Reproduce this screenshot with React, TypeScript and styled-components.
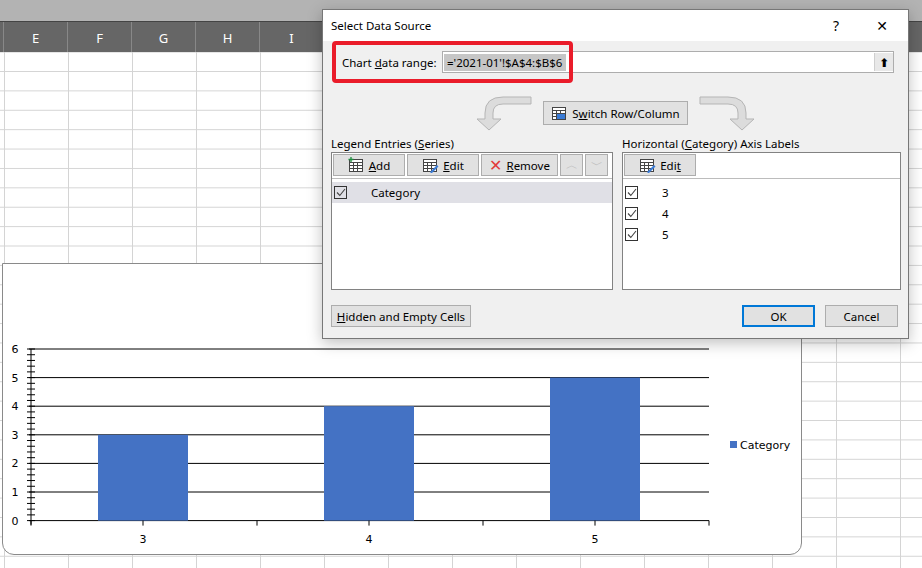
import styled, { createGlobalStyle } from "styled-components";

const GlobalStyle = createGlobalStyle`
  html, body { margin: 0; padding: 0; }
  body { font-family: "Segoe UI", "Noto Sans", "DejaVu Sans", sans-serif; font-size: 11.5px; color: #000; }
`;

const columns = ["", "E", "F", "G", "H", "I", "J", "K", "L", "M", "N", "O", "P", "Q", "R"];

const Screen = styled.div`
  position: relative;
  width: 922px;
  height: 568px;
  overflow: hidden;
  background: #fff;
`;

const TopStrip = styled.div`
  height: 21px;
  background: #b3b3b3;
  border-bottom: 1px solid #444;
`;

const HeaderRow = styled.div`
  display: flex;
  height: 30px;
  background: #666;
  color: #fff;
  margin-left: -60px;
`;

const HeaderCell = styled.div`
  flex: 0 0 64px;
  display: flex;
  align-items: center;
  justify-content: center;
  border-right: 1px solid #888;
  box-sizing: border-box;
  font-size: 13px;
  padding-top: 2px;
`;

const Cells = styled.div`
  height: 517px;
  background-image:
    linear-gradient(to right, #d4d4d4 1px, transparent 1px),
    linear-gradient(to bottom, #d4d4d4 1px, transparent 1px);
  background-size: 64px 19.4px;
  background-position: 4px 19px;
`;

const Chart = styled.div`
  position: absolute;
  left: 2px;
  top: 263px;
  width: 800px;
  height: 292px;
  background: #fff;
  border: 1px solid #8a8a8a;
  border-radius: 0 0 12px 12px;
  box-sizing: border-box;
`;

const Dialog = styled.div`
  position: absolute;
  left: 322px;
  top: 9px;
  width: 587px;
  height: 330px;
  background: #f0f0f0;
  border: 1px solid #777;
  box-sizing: border-box;
  box-shadow: 0 4px 14px rgba(0, 0, 0, 0.25);
  display: flex;
  flex-direction: column;
`;

const TitleBar = styled.div`
  height: 31px;
  background: #fff;
  display: flex;
  align-items: center;
  padding-left: 8px;
`;

const Title = styled.div`
  flex: 1;
`;

const TitleButton = styled.div`
  width: 40px;
  text-align: center;
  font-size: 14px;
  margin-right: 6px;
`;

const Body = styled.div`
  flex: 1;
  padding: 0 8px;
  display: flex;
  flex-direction: column;
`;

const RangeRow = styled.div`
  position: relative;
  display: flex;
  align-items: center;
  margin-top: 8px;
  height: 26px;
`;

const RangeLabel = styled.div`
  padding-left: 11px;
  width: 100px;
`;

const RangeInput = styled.div`
  flex: 1;
  height: 20px;
  background: #fff;
  border: 1px solid #adadad;
  display: flex;
  align-items: center;
  margin-right: 6px;
`;

const Selected = styled.span`
  background: #c6c6c6;
  padding: 1px 4px 1px 3px;
  margin-left: 1px;
`;

const Collapse = styled.div`
  margin-left: auto;
  width: 18px;
  height: 18px;
  border-left: 1px solid #cfcfcf;
  background: #e8e8e8;
  display: flex;
  align-items: center;
  justify-content: center;
  font-size: 12px;
  font-weight: bold;
`;

const Highlight = styled.div`
  position: absolute;
  left: 1px;
  top: -8px;
  width: 241px;
  height: 42px;
  border: 4px solid #ea1c2a;
  border-radius: 4px;
  box-sizing: border-box;
`;

const SwitchRow = styled.div`
  display: flex;
  justify-content: center;
  align-items: center;
  gap: 10px;
  margin-top: 19px;
  height: 38px;
`;

const Button = styled.div<{ $primary?: boolean; $disabled?: boolean }>`
  display: inline-flex;
  align-items: center;
  justify-content: center;
  gap: 4px;
  height: 22px;
  padding: 0 7px;
  background: #e1e1e1;
  border: ${(p) => (p.$primary ? "2px solid #0078d7" : "1px solid #adadad")};
  box-sizing: border-box;
  color: ${(p) => (p.$disabled ? "#bcbcbc" : "#000")};
  white-space: nowrap;
`;

const Panels = styled.div`
  display: grid;
  grid-template-columns: 282px 279px;
  gap: 9px;
  margin-top: 4px;
`;

const PanelLabel = styled.div`
  height: 16px;
`;

const Panel = styled.div`
  height: 136px;
  background: #fff;
  border: 1px solid #828282;
  display: flex;
  flex-direction: column;
`;

const Toolbar = styled.div`
  display: flex;
  gap: 2px;
  padding: 1px;
  border-bottom: 1px solid #bcbcbc;
  height: 26px;
  box-sizing: border-box;
  margin-bottom: 3px;
`;

const ListItem = styled.div<{ $active?: boolean }>`
  display: flex;
  align-items: center;
  height: 21px;
  background: ${(p) => (p.$active ? "#e0e0e6" : "transparent")};
  padding-left: 2px;
`;

const Check = styled.div`
  width: 11px;
  height: 11px;
  border: 1px solid #333;
  margin-right: 24px;
  display: flex;
  align-items: center;
  justify-content: center;
`;

const Footer = styled.div`
  display: flex;
  align-items: center;
  margin-top: 15px;
  gap: 10px;
`;

const Spacer = styled.div`
  flex: 1;
`;

const U = styled.span`
  text-decoration: underline;
`;

const Tick = () => (
  <svg width="10" height="9" viewBox="0 0 10 9">
    <path d="M1 4.5 L3.8 7.5 L9 1" fill="none" stroke="#444" strokeWidth="1.1" />
  </svg>
);

const TableIcon = ({ pencil, plus, swap }: { pencil?: boolean; plus?: boolean; swap?: boolean }) => (
  <svg width="17" height="16" viewBox="0 0 17 16">
    <rect x="1.5" y="2.5" width="13" height="12" fill="#fff" stroke="#444" />
    <path d="M1.5 5.5h13M1.5 8.5h13M1.5 11.5h13M5.5 5.5v9M9.5 5.5v9" stroke="#444" />
    {swap && <rect x="6" y="9" width="8" height="5" fill="#3a7bd5" />}
    {plus && <path d="M3 0v5M0.5 2.5h5" stroke="#1c8c3c" strokeWidth="1.3" />}
    {pencil && <path d="M8 15 L15 8 L16.5 9.5 L9.5 16.5 Z" fill="#3a7bd5" />}
  </svg>
);

const BigArrow = ({ flip }: { flip?: boolean }) => (
  <svg width="62" height="36" viewBox="0 0 62 36" style={flip ? { transform: "scaleX(-1)" } : undefined}>
    <path
      d="M60 2 H32 Q14 2 14 18 V24 H6 L18 35 L30 24 H22 V18 Q22 9 32 9 H60 Z"
      fill="#dcdcdc"
      stroke="#b5b5b5"
    />
  </svg>
);

const chartTop = 348;
const step = 28.6;

const ChartSvg = () => {
  const base = chartTop - 263 + step * 6;
  const y0 = chartTop - 263;
  const bars = [3, 4, 5];
  const centers = [140, 366, 592];
  return (
    <svg width="800" height="292" viewBox="0 0 800 292">
      {[0, 1, 2, 3, 4, 5, 6].map((v) => (
        <g key={v}>
          <line x1="26" x2="706" y1={base - v * step} y2={base - v * step} stroke="#000" strokeWidth="1" />
          <text x="12" y={base - v * step + 4} fontSize="11" fontFamily="DejaVu Sans, sans-serif" textAnchor="middle">
            {v}
          </text>
        </g>
      ))}
      {Array.from({ length: 31 }, (_, i) => (
        <line key={i} x1="24" x2="32" y1={y0 + i * (step / 5)} y2={y0 + i * (step / 5)} stroke="#000" />
      ))}
      <line x1="28" x2="28" y1={y0} y2={base + 4} stroke="#000" />
      {[28, 254, 480, 706].map((x) => (
        <line key={x} x1={x} x2={x} y1={base} y2={base + 5} stroke="#000" />
      ))}
      {bars.map((b, i) => (
        <g key={b}>
          <rect x={centers[i] - 45} y={base - b * step} width="90" height={b * step} fill="#4472c4" />
          <line x1={centers[i]} x2={centers[i]} y1={base} y2={base + 5} stroke="#000" />
          <text x={centers[i]} y={base + 22} fontSize="11" fontFamily="DejaVu Sans, sans-serif" textAnchor="middle">
            {b}
          </text>
        </g>
      ))}
      <rect x="727" y="177" width="7" height="7" fill="#4472c4" />
      <text x="737" y="185" fontSize="11" fontFamily="DejaVu Sans, sans-serif">
        Category
      </text>
    </svg>
  );
};

const App = () => {
  return (
    <Screen>
      <GlobalStyle />
      <TopStrip />
      <HeaderRow>
        {columns.map((c, i) => (
          <HeaderCell key={i}>{c}</HeaderCell>
        ))}
      </HeaderRow>
      <Cells />

      <Chart>
        <ChartSvg />
      </Chart>

      <Dialog>
        <TitleBar>
          <Title>Select Data Source</Title>
          <TitleButton>?</TitleButton>
          <TitleButton>✕</TitleButton>
        </TitleBar>
        <Body>
          <RangeRow>
            <Highlight />
            <RangeLabel>
              Chart <U>d</U>ata range:
            </RangeLabel>
            <RangeInput>
              <Selected>='2021-01'!$A$4:$B$6</Selected>
              <Collapse>⬆</Collapse>
            </RangeInput>
          </RangeRow>

          <SwitchRow>
            <BigArrow />
            <Button style={{ height: 24 }}>
              <TableIcon swap />
              <span>
                S<U>w</U>itch Row/Column
              </span>
            </Button>
            <BigArrow flip />
          </SwitchRow>

          <Panels>
            <div>
              <PanelLabel>
                Legend Entries (<U>S</U>eries)
              </PanelLabel>
              <Panel>
                <Toolbar>
                  <Button style={{ width: 72 }}>
                    <TableIcon plus />
                    <span>
                      <U>A</U>dd
                    </span>
                  </Button>
                  <Button style={{ width: 72 }}>
                    <TableIcon pencil />
                    <span>
                      <U>E</U>dit
                    </span>
                  </Button>
                  <Button style={{ width: 77 }}>
                    <span style={{ color: "#e23a3a", fontSize: 16 }}>✕</span>
                    <span>
                      <U>R</U>emove
                    </span>
                  </Button>
                  <Button $disabled style={{ width: 23 }}>︿</Button>
                  <Button $disabled style={{ width: 23 }}>﹀</Button>
                </Toolbar>
                <ListItem $active>
                  <Check>
                    <Tick />
                  </Check>
                  Category
                </ListItem>
              </Panel>
            </div>
            <div>
              <PanelLabel>
                Horizontal (<U>C</U>ategory) Axis Labels
              </PanelLabel>
              <Panel>
                <Toolbar>
                  <Button style={{ width: 72 }}>
                    <TableIcon pencil />
                    <span>
                      Edi<U>t</U>
                    </span>
                  </Button>
                </Toolbar>
                {["3", "4", "5"].map((v) => (
                  <ListItem key={v}>
                    <Check>
                      <Tick />
                    </Check>
                    {v}
                  </ListItem>
                ))}
              </Panel>
            </div>
          </Panels>

          <Footer>
            <Button style={{ width: 140 }}>
              <span>
                <U>H</U>idden and Empty Cells
              </span>
            </Button>
            <Spacer />
            <Button $primary style={{ width: 73 }}>
              OK
            </Button>
            <Button style={{ width: 73, marginRight: 2 }}>Cancel</Button>
          </Footer>
        </Body>
      </Dialog>
    </Screen>
  );
};

export default App;
